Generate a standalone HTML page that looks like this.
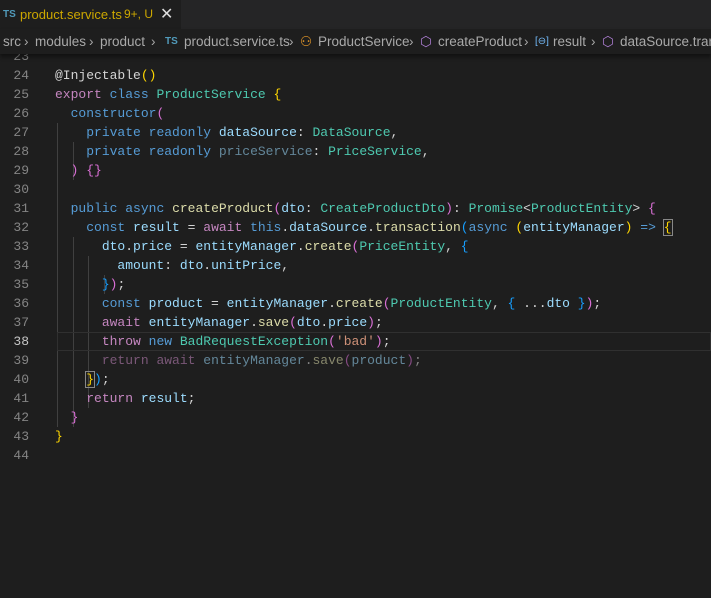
<!DOCTYPE html>
<html><head><style>
body{margin:0;width:711px;height:495px;background:#1e1e1e;overflow:hidden;font-family:"Liberation Sans",sans-serif}
.tabs{height:29px;background:#252526;position:relative}
.tab{position:absolute;left:0;top:0;width:181px;height:29px;background:#1e1e1e;color:#cca700;font-size:13px;line-height:29px}
.bc{position:absolute;top:29px;left:0;width:711px;height:25px;background:#1e1e1e;color:#a9a9a9;font-size:13.5px;line-height:25px;white-space:nowrap;box-shadow:0 3px 4px rgba(0,0,0,.45);z-index:2;overflow:hidden}
.bc span{position:absolute;top:0}
.ts{color:#519aba;font-weight:bold;font-size:10px}
.code{position:absolute;top:47px;left:0;font-family:"Liberation Mono",monospace;font-size:13px;line-height:19px;color:#d4d4d4;white-space:pre}
.ln{position:absolute;left:0;width:29px;text-align:right;color:#858585}
.tx{position:absolute;left:55px}
.k{color:#569cd6}.c{color:#c586c0}.v{color:#9cdcfe}.f{color:#dcdcaa}.t{color:#4ec9b0}.s{color:#ce9178}
.y{color:#ffd700}.p{color:#da70d6}.b{color:#179fff}
.d{opacity:.55}
.g{position:absolute;width:1px;background:#404040}
</style></head><body>
<div class="tabs"><div class="tab"><span class="ts" style="position:absolute;left:3px">TS</span><span style="position:absolute;left:20px">product.service.ts</span><span style="position:absolute;left:124px;font-size:12px">9+, U</span><span style="position:absolute;left:160px;color:#ddd;font-size:16px">✕</span></div></div>
<div class="bc">
<span style="left:3px">src</span><span style="left:24px">›</span>
<span style="left:35px">modules</span><span style="left:89px">›</span>
<span style="left:100px">product</span><span style="left:151px">›</span>
<span class="ts" style="left:165px">TS</span><span style="left:184px">product.service.ts</span><span style="left:289px">›</span>
<span style="left:300px;color:#ee9d28">⚇</span><span style="left:318px">ProductService</span><span style="left:409px">›</span>
<span style="left:420px;color:#b180d7">⬡</span><span style="left:438px">createProduct</span><span style="left:524px">›</span>
<span style="left:535px;color:#75beff;font-size:10px">[⊖]</span><span style="left:553px">result</span><span style="left:591px">›</span>
<span style="left:602px;color:#b180d7">⬡</span><span style="left:620px">dataSource.transaction</span>
</div>
<div class="code">
<div class="g" style="left:57px;top:76px;height:304px"></div>
<div class="g" style="left:73px;top:95px;height:38px"></div>
<div class="g" style="left:73px;top:190px;height:190px"></div>
<div class="g" style="left:88px;top:209px;height:152px"></div>
<div class="g" style="left:104px;top:228px;height:19px"></div>
<div style="position:absolute;left:57px;top:285px;width:652px;height:17px;border:1px solid #303030"></div>
<div class="ln" style="top:0">23</div>
<div class="ln" style="top:19px">24</div><div class="tx" style="top:19px">@Injectable<span class="y">()</span></div>
<div class="ln" style="top:38px">25</div><div class="tx" style="top:38px"><span class="c">export</span> <span class="k">class</span> <span class="t">ProductService</span> <span class="y">{</span></div>
<div class="ln" style="top:57px">26</div><div class="tx" style="top:57px">  <span class="k">constructor</span><span class="p">(</span></div>
<div class="ln" style="top:76px">27</div><div class="tx" style="top:76px">    <span class="k">private</span> <span class="k">readonly</span> <span class="v">dataSource</span>: <span class="t">DataSource</span>,</div>
<div class="ln" style="top:95px">28</div><div class="tx" style="top:95px">    <span class="k">private</span> <span class="k">readonly</span> <span class="v d">priceService</span>: <span class="t">PriceService</span>,</div>
<div class="ln" style="top:114px">29</div><div class="tx" style="top:114px">  <span class="p">)</span> <span class="p">{}</span></div>
<div class="ln" style="top:133px">30</div>
<div class="ln" style="top:152px">31</div><div class="tx" style="top:152px">  <span class="k">public</span> <span class="k">async</span> <span class="f">createProduct</span><span class="p">(</span><span class="v">dto</span>: <span class="t">CreateProductDto</span><span class="p">)</span>: <span class="t">Promise</span>&lt;<span class="t">ProductEntity</span>&gt; <span class="p">{</span></div>
<div class="ln" style="top:171px">32</div><div class="tx" style="top:171px">    <span class="k">const</span> <span class="v">result</span> = <span class="c">await</span> <span class="k">this</span>.<span class="v">dataSource</span>.<span class="f">transaction</span><span class="b">(</span><span class="k">async</span> <span class="y">(</span><span class="v">entityManager</span><span class="y">)</span> <span class="k">=&gt;</span> <span class="y" style="outline:1px solid #888">{</span></div>
<div class="ln" style="top:190px">33</div><div class="tx" style="top:190px">      <span class="v">dto</span>.<span class="v">price</span> = <span class="v">entityManager</span>.<span class="f">create</span><span class="p">(</span><span class="t">PriceEntity</span>, <span class="b">{</span></div>
<div class="ln" style="top:209px">34</div><div class="tx" style="top:209px">        <span class="v">amount</span>: <span class="v">dto</span>.<span class="v">unitPrice</span>,</div>
<div class="ln" style="top:228px">35</div><div class="tx" style="top:228px">      <span class="b">}</span><span class="p">)</span>;</div>
<div class="ln" style="top:247px">36</div><div class="tx" style="top:247px">      <span class="k">const</span> <span class="v">product</span> = <span class="v">entityManager</span>.<span class="f">create</span><span class="p">(</span><span class="t">ProductEntity</span>, <span class="b">{</span> ...<span class="v">dto</span> <span class="b">}</span><span class="p">)</span>;</div>
<div class="ln" style="top:266px">37</div><div class="tx" style="top:266px">      <span class="c">await</span> <span class="v">entityManager</span>.<span class="f">save</span><span class="p">(</span><span class="v">dto</span>.<span class="v">price</span><span class="p">)</span>;</div>
<div class="ln" style="top:285px;color:#c6c6c6">38</div><div class="tx" style="top:285px">      <span class="c">throw</span> <span class="k">new</span> <span class="t">BadRequestException</span><span class="p">(</span><span class="s">'bad'</span><span class="p">)</span>;</div>
<div class="ln" style="top:304px">39</div><div class="tx d" style="top:304px">      <span class="c">return</span> <span class="c">await</span> <span class="v">entityManager</span>.<span class="f">save</span><span class="p">(</span><span class="v">product</span><span class="p">)</span>;</div>
<div class="ln" style="top:323px">40</div><div class="tx" style="top:323px">    <span class="y" style="outline:1px solid #888">}</span><span class="b">)</span>;</div>
<div class="ln" style="top:342px">41</div><div class="tx" style="top:342px">    <span class="c">return</span> <span class="v">result</span>;</div>
<div class="ln" style="top:361px">42</div><div class="tx" style="top:361px">  <span class="p">}</span></div>
<div class="ln" style="top:380px">43</div><div class="tx" style="top:380px"><span class="y">}</span></div>
<div class="ln" style="top:399px">44</div>
</div>
</body></html>
